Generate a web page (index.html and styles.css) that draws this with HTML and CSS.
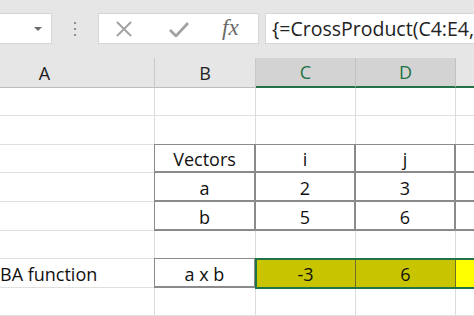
FILE: index.html
```html
<!DOCTYPE html>
<html lang="en">
<head>
  <meta charset="UTF-8">
  <title>CrossProduct</title>
  <link rel="stylesheet" href="styles.css">
</head>
<body>
  <div class="toolbar">
    <div class="name-box"><span class="caret"></span></div>
    <div class="grip"><i></i><i></i><i></i></div>
    <div class="fx-tools">
      <svg class="ico" width="18" height="16" viewBox="0 0 18 16"><path d="M2 1 L16 15 M16 1 L2 15" stroke="#a3a3a3" stroke-width="2" fill="none"/></svg>
      <svg class="ico" width="20" height="16" viewBox="0 0 20 16"><path d="M1 9 L7 15 L19 2" stroke="#a3a3a3" stroke-width="2.8" fill="none"/></svg>
      <span class="fx">fx</span>
    </div>
    <div class="formula">{=CrossProduct(C4:E4,</div>
  </div>

  <div class="sheet">
    <div class="hd hd-a">A</div>
    <div class="hd">B</div>
    <div class="hd sel">C</div>
    <div class="hd sel">D</div>
    <div class="hd hd-e"></div>

    <div class="c"></div><div class="c"></div><div class="c"></div><div class="c"></div><div class="c last"></div>
    <div class="c"></div><div class="c"></div><div class="c"></div><div class="c"></div><div class="c last"></div>

    <div class="c"></div><div class="c t top left">Vectors</div><div class="c t top">i</div><div class="c t top">j</div><div class="c t top last"></div>
    <div class="c"></div><div class="c t left">a</div><div class="c t">2</div><div class="c t">3</div><div class="c t last"></div>
    <div class="c"></div><div class="c t left">b</div><div class="c t">5</div><div class="c t">6</div><div class="c t last"></div>

    <div class="c"></div><div class="c"></div><div class="c"></div><div class="c"></div><div class="c last"></div>

    <div class="c r8 col1 label">BA function</div>
    <div class="c r8 col2 t top left">a x b</div>
    <div class="c r8 col3 shade">-3</div>
    <div class="c r8 col4 shade">6</div>
    <div class="c r8 col5 active"></div>

    <div class="c"></div><div class="c"></div><div class="c"></div><div class="c"></div><div class="c last"></div>

    <div class="selection"></div>
  </div>
</body>
</html>
```

FILE: styles.css
```css
body { margin: 0; background: #fff; font-family: 'Open Sans', 'Noto Sans', Arial, sans-serif; overflow: hidden; width: 474px; height: 316px; }

.toolbar { height: 58px; background: #e6e6e6; display: flex; align-items: flex-start; padding-top: 13px; box-sizing: border-box; }
.name-box { width: 52px; height: 31px; background: #fff; border: 1px solid #d6d6d6; border-left: none; box-sizing: border-box; display: flex; align-items: center; justify-content: flex-end; padding-right: 9px; }
.caret { width: 0; height: 0; border-left: 4px solid transparent; border-right: 4px solid transparent; border-top: 4px solid #6c6c6c; }
.grip { width: 46px; height: 31px; display: flex; flex-direction: column; align-items: center; justify-content: center; gap: 4px; }
.grip i { width: 2px; height: 2px; background: #8c8c8c; display: block; }
.fx-tools { width: 161px; height: 31px; background: #fff; border: 1px solid #d6d6d6; box-sizing: border-box; display: flex; align-items: center; padding-left: 16px; }
.fx-tools .ico { margin-right: 36px; }
.fx-tools .ico + .ico { margin-right: 33px; }
.fx { font-family: 'Liberation Serif', 'DejaVu Serif', serif; font-style: italic; font-size: 23px; color: #6a6a6a; margin-top: -2px; }
.formula { flex: 1; margin-left: 6px; height: 31px; background: #fff; border: 1px solid #d6d6d6; border-right: none; box-sizing: border-box; font-size: 19.5px; line-height: 29px; color: #222; padding-left: 6px; white-space: nowrap; overflow: hidden; }

.sheet { display: grid; grid-template-columns: 155px 101px 100px 100px 18px; grid-template-rows: 30px 28px 29px 28px 29px 29px 28px 29px 28px; }
.hd { background: #e6e6e6; border-right: 1px solid #c9c9c9; border-bottom: 1px solid #bdbdbd; font-size: 18px; color: #222; display: flex; align-items: center; justify-content: center; box-sizing: border-box; }
.hd-a { padding-right: 65px; }
.hd.sel { background: #d3d3d3; color: #217346; border-bottom: 2px solid #217346; border-right-color: #c2c2c2; }
.hd-e { border-bottom: 2px solid #217346; border-right: none; }

.c { border-right: 1px solid #dcdcdc; border-bottom: 1px solid #e0e0e0; box-sizing: border-box; font-size: 18px; color: #111; display: flex; align-items: center; justify-content: center; white-space: nowrap; padding-top: 2px; }
.c.t { border-right: 2px solid #8a8a8a; border-bottom: 2px solid #8a8a8a; }
.c.last { border-right: none; }
.c.top { box-shadow: 0 -1px 0 #8a8a8a; }
.c.left { box-shadow: -1px 0 0 #8a8a8a; }
.c.top.left { box-shadow: 0 -1px 0 #8a8a8a, -1px 0 0 #8a8a8a, -1px -1px 0 #8a8a8a; }
.r8 { grid-row: 8; }
.col1 { grid-column: 1; }
.col2 { grid-column: 2; }
.col3 { grid-column: 3; }
.col4 { grid-column: 4; }
.col5 { grid-column: 5; }
.c.label { justify-content: flex-start; }
.c.shade { background: #c8c500; border-right: 1px solid #6f6f2a; }
.c.active { background: #ffff00; border-right: none; }

.selection { grid-row: 8; grid-column: 3 / 6; border: 2px solid #217346; border-right: none; margin: -1px 0 -1px -1px; pointer-events: none; }
```
